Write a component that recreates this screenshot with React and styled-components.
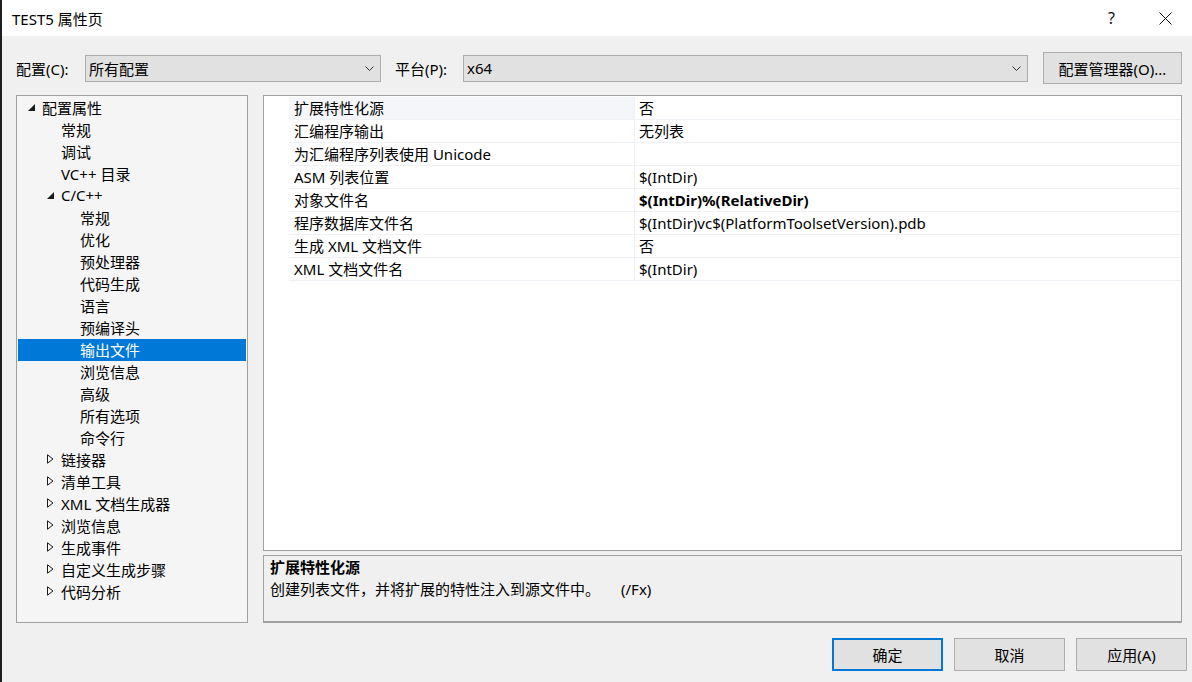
import React, { useState } from 'react';
import styled, { createGlobalStyle, css } from 'styled-components';

const GlobalStyle = createGlobalStyle`
  html, body {
    margin: 0;
    padding: 0;
    background: #f0f0f0;
  }
  body {
    font-family: "Noto Sans", "Noto Sans CJK SC", sans-serif;
    font-size: 15px;
    color: #000;
  }
  * {
    box-sizing: border-box;
  }
`;

const treeData = [
  { label: '配置属性', level: 0, toggle: 'open' },
  { label: '常规', level: 1 },
  { label: '调试', level: 1 },
  { label: 'VC++ 目录', level: 1 },
  { label: 'C/C++', level: 1, toggle: 'open' },
  { label: '常规', level: 2 },
  { label: '优化', level: 2 },
  { label: '预处理器', level: 2 },
  { label: '代码生成', level: 2 },
  { label: '语言', level: 2 },
  { label: '预编译头', level: 2 },
  { label: '输出文件', level: 2 },
  { label: '浏览信息', level: 2 },
  { label: '高级', level: 2 },
  { label: '所有选项', level: 2 },
  { label: '命令行', level: 2 },
  { label: '链接器', level: 1, toggle: 'closed' },
  { label: '清单工具', level: 1, toggle: 'closed' },
  { label: 'XML 文档生成器', level: 1, toggle: 'closed' },
  { label: '浏览信息', level: 1, toggle: 'closed' },
  { label: '生成事件', level: 1, toggle: 'closed' },
  { label: '自定义生成步骤', level: 1, toggle: 'closed' },
  { label: '代码分析', level: 1, toggle: 'closed' },
];

const properties = [
  { name: '扩展特性化源', value: '否' },
  { name: '汇编程序输出', value: '无列表' },
  { name: '为汇编程序列表使用 Unicode', value: '' },
  { name: 'ASM 列表位置', value: '$(IntDir)' },
  { name: '对象文件名', value: '$(IntDir)%(RelativeDir)', bold: true },
  { name: '程序数据库文件名', value: '$(IntDir)vc$(PlatformToolsetVersion).pdb' },
  { name: '生成 XML 文档文件', value: '否' },
  { name: 'XML 文档文件名', value: '$(IntDir)' },
];

function Chevron() {
  return (
    <svg width="9" height="5" viewBox="0 0 9 5">
      <path d="M0.5 0.5 L4.5 4.5 L8.5 0.5" fill="none" stroke="#333" strokeWidth="1" />
    </svg>
  );
}

function ToggleIcon({ type }) {
  if (type === 'open') {
    return (
      <svg width="7" height="7" viewBox="0 0 7 7">
        <path d="M7 0 L7 7 L0 7 Z" fill="#1b1b1b" />
      </svg>
    );
  }
  return (
    <svg width="7" height="10" viewBox="0 0 7 10">
      <path d="M0.5 0.8 L6 5 L0.5 9.2 Z" fill="none" stroke="#1b1b1b" strokeWidth="1" />
    </svg>
  );
}

function App() {
  const [selected, setSelected] = useState(11);

  return (
    <>
      <GlobalStyle />
      <Window>
        <TitleBar>
          <TitleText>TEST5 属性页</TitleText>
          <TitleButtons>
            <HelpMark>?</HelpMark>
            <svg width="13" height="13" viewBox="0 0 13 13">
              <path d="M0.5 0.5 L12.5 12.5 M12.5 0.5 L0.5 12.5" stroke="#111" strokeWidth="1" />
            </svg>
          </TitleButtons>
        </TitleBar>

        <Body>
          <ConfigRow>
            <FieldLabel width="69px">配置(C):</FieldLabel>
            <Select width="296px">
              <span>所有配置</span>
              <Chevron />
            </Select>
            <FieldLabel width="68px" gap="14px">平台(P):</FieldLabel>
            <Select width="565px">
              <span>x64</span>
              <Chevron />
            </Select>
            <HeaderButton>配置管理器(O)...</HeaderButton>
          </ConfigRow>

          <Main>
            <Tree>
              {treeData.map((item, i) => (
                <TreeRow
                  key={i}
                  level={item.level}
                  active={i === selected}
                  onClick={() => setSelected(i)}
                >
                  <ToggleBox>{item.toggle && <ToggleIcon type={item.toggle} />}</ToggleBox>
                  <span>{item.label}</span>
                </TreeRow>
              ))}
            </Tree>

            <RightColumn>
              <Grid>
                {properties.map((p, i) => (
                  <PropRow key={i}>
                    <Gutter />
                    <NameCell first={i === 0}>{p.name}</NameCell>
                    <ValueCell bold={p.bold}>{p.value}</ValueCell>
                  </PropRow>
                ))}
              </Grid>
              <Description>
                <DescTitle>扩展特性化源</DescTitle>
                <DescText>
                  创建列表文件，并将扩展的特性注入到源文件中。<Switch>(/Fx)</Switch>
                </DescText>
              </Description>
            </RightColumn>
          </Main>

          <Footer>
            <DialogButton primary>确定</DialogButton>
            <DialogButton>取消</DialogButton>
            <DialogButton>应用(A)</DialogButton>
          </Footer>
        </Body>
      </Window>
    </>
  );
}

const Window = styled.div`
  display: flex;
  flex-direction: column;
  width: 1192px;
  height: 682px;
  overflow: hidden;
  background: #f0f0f0;
  border-left: 2px solid #1f1f1f;
`;

const TitleBar = styled.div`
  display: flex;
  align-items: center;
  justify-content: space-between;
  height: 36px;
  padding: 0 20px 0 10px;
  background: #ffffff;
`;

const TitleText = styled.div`
  font-size: 15px;
  color: #000;
`;

const TitleButtons = styled.div`
  display: flex;
  align-items: center;
  gap: 44px;
`;

const HelpMark = styled.span`
  font-size: 16px;
  color: #111;
`;

const Body = styled.div`
  display: flex;
  flex-direction: column;
  flex: 1;
  padding: 16px 10px 0 14px;
`;

const ConfigRow = styled.div`
  display: flex;
  align-items: center;
  height: 32px;
`;

const FieldLabel = styled.div`
  width: ${(p) => p.width};
  margin-left: ${(p) => p.gap || '0'};
  white-space: nowrap;
`;

const Select = styled.div`
  display: flex;
  align-items: center;
  justify-content: space-between;
  width: ${(p) => p.width};
  height: 27px;
  padding: 0 6px 0 3px;
  background: #e1e1e1;
  border: 1px solid #adadad;
`;

const HeaderButton = styled.div`
  display: flex;
  align-items: center;
  justify-content: center;
  width: 139px;
  height: 32px;
  margin-left: 15px;
  background: #e1e1e1;
  border: 1px solid #adadad;
  white-space: nowrap;
`;

const Main = styled.div`
  display: flex;
  gap: 15px;
  margin-top: 11px;
  height: 528px;
`;

const Tree = styled.div`
  width: 232px;
  height: 528px;
  padding: 1px;
  background: #f5f5f5;
  border: 1px solid #a0a0a0;
`;

const TreeRow = styled.div`
  display: flex;
  align-items: center;
  height: 22px;
  padding-left: ${(p) => 5 + p.level * 19}px;
  padding-bottom: 2px;
  white-space: nowrap;
  cursor: default;
  ${(p) =>
    p.active &&
    css`
      background: #0078d7;
      color: #ffffff;
    `}
`;

const ToggleBox = styled.div`
  display: flex;
  align-items: center;
  width: 19px;
  height: 20px;
  padding-left: 5px;
`;

const RightColumn = styled.div`
  display: flex;
  flex-direction: column;
  gap: 4px;
  width: 919px;
`;

const Grid = styled.div`
  height: 456px;
  padding-top: 1px;
  background: #ffffff;
  border: 1px solid #a0a0a0;
`;

const PropRow = styled.div`
  display: flex;
  height: 23px;
`;

const Gutter = styled.div`
  width: 25px;
`;

const NameCell = styled.div`
  display: flex;
  align-items: center;
  width: 346px;
  padding: 0 0 1px 5px;
  background: ${(p) => (p.first ? '#f4f6fa' : '#ffffff')};
  border-bottom: 1px solid #eef1f6;
  border-right: 1px solid #eef1f6;
  white-space: nowrap;
`;

const ValueCell = styled.div`
  display: flex;
  align-items: center;
  flex: 1;
  padding: 0 0 1px 4px;
  border-bottom: 1px solid #eef1f6;
  font-weight: ${(p) => (p.bold ? 700 : 400)};
  white-space: nowrap;
`;

const Description = styled.div`
  height: 68px;
  padding: 0 6px;
  background: #f0f0f0;
  border: 1px solid #a0a0a0;
  border-bottom-width: 2px;
`;

const DescTitle = styled.div`
  height: 22px;
  line-height: 22px;
  font-weight: 700;
`;

const DescText = styled.div`
  height: 22px;
  line-height: 22px;
  white-space: nowrap;
`;

const Switch = styled.span`
  margin-left: 21px;
`;

const Footer = styled.div`
  display: flex;
  justify-content: flex-end;
  gap: 11px;
  margin-top: 15px;
  margin-right: -5px;
`;

const DialogButton = styled.div`
  display: flex;
  align-items: center;
  justify-content: center;
  width: 111px;
  height: 33px;
  background: #e1e1e1;
  border: ${(p) => (p.primary ? '2px solid #0078d7' : '1px solid #adadad')};
  cursor: default;
`;

export default App;
